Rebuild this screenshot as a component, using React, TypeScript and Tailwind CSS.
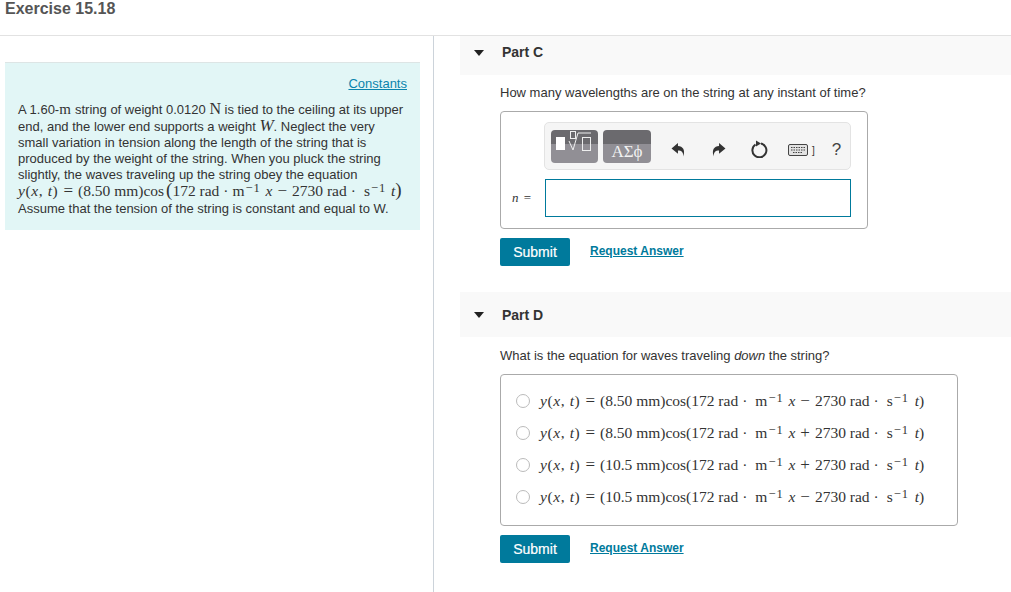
const SERIF = "font-['Liberation_Serif',serif]";

function Sup() {
  return (
    <sup className="relative -top-[4px] ml-[1px] inline-block w-[15px] align-baseline text-[12.5px] leading-none tracking-[1px]">
      −1
    </sup>
  );
}

function Args() {
  return (
    <span className="tracking-[0.6px]">
      <i>y</i>(<i>x</i>, <i>t</i>)
    </span>
  );
}

function Equation({ amp, sign }: { amp: string; sign: string }) {
  return (
    <span className={`${SERIF} whitespace-nowrap text-[15.5px] leading-[20px] text-[#333]`}>
      <Args />
      <span className="mx-[5px] text-[17px]">=</span>({amp} mm)cos(172 rad
      <span className="mx-[4px]">·</span>
      <span className="ml-[4px]">m</span>
      <Sup />
      <i className="ml-[5px]">x</i>
      <span className="mx-[5px] text-[17px]">{sign}</span>
      2730 rad
      <span className="mx-[4px]">·</span>
      <span className="ml-[4px]">s</span>
      <Sup />
      <i className="ml-[6px]">t</i>)
    </span>
  );
}

function PartHeader({ title, clipped }: { title: string; clipped?: boolean }) {
  return (
    <div className={`flex items-center bg-[#f9f9f9] pl-[14px] ${clipped ? 'h-[39px] pb-[6px]' : 'h-[45px] pt-[1px]'}`}>
      <span className="h-0 w-0 border-x-[5px] border-t-[6px] border-x-transparent border-t-[#222]" />
      <span className="ml-[18px] text-[14px] font-bold text-[#333]">{title}</span>
    </div>
  );
}

function Actions() {
  return (
    <div className="flex items-center">
      <button className="flex h-[28px] w-[70px] items-center justify-center rounded-[2px] bg-[#007a9c] text-[14px] text-white [-webkit-text-stroke:0.2px_white]">
        Submit
      </button>
      <a className="mb-[3px] ml-[20px] text-[12px] font-bold text-[#007a9c] underline">Request Answer</a>
    </div>
  );
}

function Toolbar() {
  return (
    <div className="ml-[43px] flex h-[48px] w-[307px] items-center rounded-[5px] border border-[#e3e3e3] bg-[#f5f5f5] pt-[6px] pl-[6px]">
      <div className="-mt-[6px] h-[33px] w-[47px] rounded-[4px] bg-[linear-gradient(#6b6a6e_0_42%,#918f95_42%_100%)]">
        <svg width="47" height="33" viewBox="0 0 47 33" fill="none" stroke="#eee">
          <rect x="5" y="7" width="9" height="13" fill="#fff" stroke="none" />
          <rect x="19.500" y="1.500" width="5" height="7" />
          <path d="M18 11l4 9 5-17h13" />
          <rect x="31.500" y="7.500" width="8" height="13" />
        </svg>
      </div>
      <div className={`${SERIF} -mt-[6px] ml-[5px] flex h-[33px] w-[48px] items-end justify-center rounded-[4px] bg-[linear-gradient(#6b6a6e_0_42%,#918f95_42%_100%)] pb-[3px] text-[17px] leading-none text-[#f2f2f2]`}>
        ΑΣϕ
      </div>
      <svg className="ml-[20px]" width="15" height="15" viewBox="0 0 14 14" fill="#333">
        <path d="M6.500 1 0.500 6l6 5V8c3 0 5 1 5 5.500C13.500 7.500 11 4 6.500 3.800z" />
      </svg>
      <svg className="ml-[25px]" width="15" height="15" viewBox="0 0 14 14" fill="#333">
        <path d="M7.500 1l6 5-6 5V8c-3 0-5 1-5 5.500C.5 7.500 3 4 7.500 3.800z" />
      </svg>
      <svg className="ml-[24px]" width="18" height="18" viewBox="0 0 18 18" fill="none" stroke="#333" strokeWidth="2">
        <path d="M5.500 4.500a7 7 0 1 0 5.500-1" />
        <path d="M6 .5v6h0l5-3z" fill="#333" stroke="none" />
      </svg>
      <svg className="mt-[2px] ml-[20px]" width="20" height="12" viewBox="0 0 20 12" fill="#e2e2e2" stroke="#444">
        <rect x="0.500" y="0.500" width="19" height="11" rx="1.500" />
        <path d="M3 3.500h14M3 6h14M5 8.500h10" strokeDasharray="1.500 1" />
      </svg>
      <span className="mt-[2px] ml-[4px] text-[10px] text-[#333]">]</span>
      <span className="ml-[17px] text-[17px] leading-none text-[#444]">?</span>
    </div>
  );
}

export default function App() {
  return (
    <div className="h-[592px] w-[1011px] overflow-hidden bg-white font-['Liberation_Sans',sans-serif]">
      <header className="h-[36px] border-b border-[#e2e2e2] pt-[1px] pl-[5px]">
        <h1 className="text-[16px] leading-[16px] font-bold text-[#555]">Exercise 15.18</h1>
      </header>

      <div className="flex h-[556px]">
        <aside className="w-[434px] border-r border-[#ccd3da] pt-[26px] pl-[5px]">
          <div className="h-[168px] w-[415px] border-t border-[#dde5e5] bg-[#e2f6f6] px-[13px] pt-[13px]">
            <div className="text-right text-[13px] leading-[16px]">
              <a className="text-[#0a84ad] underline">Constants</a>
            </div>
            <p className="mt-[9px] text-[13px] leading-[16px] whitespace-nowrap text-[#333]">
              A 1.60-<span className={`${SERIF} text-[15px] tracking-[0.5px]`}>m</span> string of weight 0.0120{' '}
              <span className={`${SERIF} text-[16px]`}>N</span> is tied to the ceiling at its upper
              <br />
              end, and the lower end supports a weight <i className={`${SERIF} text-[17px]`}>W</i>. Neglect the very
              <br />
              small variation in tension along the length of the string that is
              <br />
              produced by the weight of the string. When you pluck the string
              <br />
              slightly, the waves traveling up the string obey the equation
            </p>
            <div className={`${SERIF} -mt-[3px] h-[21px] whitespace-nowrap text-[15.5px] leading-[17px] text-[#333]`}>
              <Args />
              <span className="mx-[5px] text-[17px]">=</span>(8.50 mm)cos
              <span className="ml-[2px] text-[19px] leading-none">(</span>172 rad
              <span className="mx-[4px]">·</span>m<Sup />
              <i className="ml-[5px]">x</i>
              <span className="mx-[5px] text-[17px]">−</span>2730 rad<span className="mx-[4px]">·</span>
              <span className="ml-[4px]">s</span>
              <Sup />
              <i className="ml-[5px]">t</i>
              <span className="text-[19px] leading-none">)</span>
            </div>
            <p className="text-[13px] leading-[16px] text-[#333]">
              Assume that the tension of the string is constant and equal to W.
            </p>
          </div>
        </aside>

        <main className="flex-1 pl-[26px]">
          <PartHeader title="Part C" clipped />
          <div className="pl-[40px]">
            <p className="mt-[10px] text-[13px] leading-[16px] text-[#333]">
              How many wavelengths are on the string at any instant of time?
            </p>
            <div className="mt-[10px] h-[118px] w-[368px] rounded-[4px] border border-[#aaa] pt-[10px]">
              <Toolbar />
              <div className="mt-[9px] flex items-center">
                <span className={`${SERIF} w-[44px] pl-[11px] text-[13px] tracking-[1px] whitespace-pre text-[#333]`}>
                  <i>n</i> =
                </span>
                <input className="h-[38px] w-[306px] border border-[#007a9c] bg-white" />
              </div>
            </div>
            <div className="mt-[9px]">
              <Actions />
            </div>
          </div>

          <div className="mt-[26px]">
            <PartHeader title="Part D" />
          </div>
          <div className="pl-[40px]">
            <p className="mt-[11px] text-[13px] leading-[16px] text-[#333]">
              What is the equation for waves traveling <i>down</i> the string?
            </p>
            <div className="mt-[10px] flex h-[152px] w-[458px] flex-col justify-center gap-[12px] rounded-[4px] border border-[#aaa] pb-[2px] pl-[15px]">
              {[
                ['8.50', '−'],
                ['8.50', '+'],
                ['10.5', '+'],
                ['10.5', '−'],
              ].map(([amp, sign], i) => (
                <div key={i} className="flex h-[20px] items-center">
                  <span className="h-[14px] w-[14px] rounded-full border border-[#bbb] bg-white" />
                  <span className="ml-[10px]">
                    <Equation amp={amp} sign={sign} />
                  </span>
                </div>
              ))}
            </div>
            <div className="mt-[9px]">
              <Actions />
            </div>
          </div>
        </main>
      </div>
    </div>
  );
}
